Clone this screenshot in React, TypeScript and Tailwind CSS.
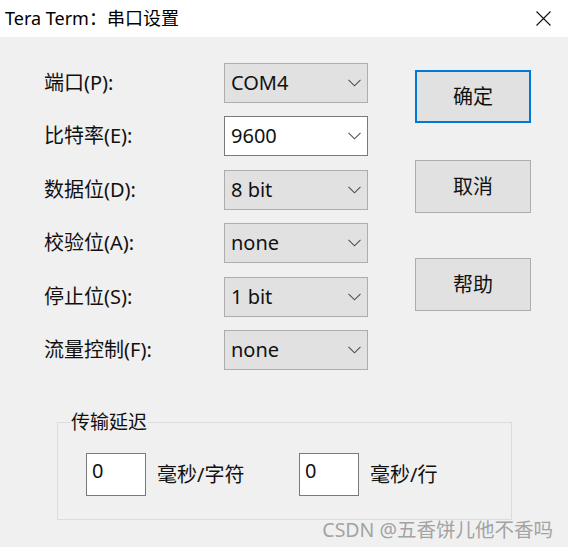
import React from "react";

const FONT = { fontFamily: '"Noto Sans", "Noto Sans CJK SC", sans-serif' };

function Chevron() {
  return (
    <svg width="13" height="8" viewBox="0 0 13 8" className="shrink-0">
      <path d="M0.5 0.8 L6.5 6.8 L12.5 0.8" fill="none" stroke="#505050" strokeWidth="1.1" />
    </svg>
  );
}

function Combo({ value, focused }: { value: string; focused?: boolean }) {
  return (
    <div
      className={
        "w-[144px] h-[40px] flex items-center justify-between pl-[6px] pr-[6px] border " +
        (focused ? "bg-white border-[#7a7a7a]" : "bg-[#e1e1e1] border-[#adadad]")
      }
    >
      <span className="text-[20px] text-[#111]">{value}</span>
      <Chevron />
    </div>
  );
}

function DlgButton({ label, primary }: { label: string; primary?: boolean }) {
  return (
    <button
      type="button"
      className={
        "w-[116px] h-[53px] bg-[#e1e1e1] text-[20px] text-[#111] flex items-center justify-center " +
        (primary ? "border-2 border-[#0078d7]" : "border border-[#adadad]")
      }
    >
      {label}
    </button>
  );
}

const rows = [
  { label: "端口(P):", value: "COM4" },
  { label: "比特率(E):", value: "9600", focused: true },
  { label: "数据位(D):", value: "8 bit" },
  { label: "校验位(A):", value: "none" },
  { label: "停止位(S):", value: "1 bit" },
  { label: "流量控制(F):", value: "none" },
];

export default function App() {
  return (
    <div className="w-[568px] h-[547px] bg-[#f0f0f0] overflow-hidden text-[#111]" style={FONT}>
      <div className="h-[37px] bg-white flex items-center justify-between pl-[5px] pr-[17px]">
        <span className="text-[18px] text-black">Tera Term：串口设置</span>
        <svg width="15" height="15" viewBox="0 0 15 15">
          <path d="M0.5 0.5 L14.5 14.5 M14.5 0.5 L0.5 14.5" stroke="#111" strokeWidth="1.1" />
        </svg>
      </div>

      <div className="flex pl-[44px]">
        <div className="flex flex-col gap-[13.4px] pt-[26px]">
          {rows.map((r) => (
            <div key={r.label} className="flex items-center">
              <span className="w-[180px] text-[20px]">{r.label}</span>
              <Combo value={r.value} focused={r.focused} />
            </div>
          ))}
        </div>
        <div className="flex flex-col ml-[47px] pt-[33px]">
          <DlgButton label="确定" primary />
          <div className="mt-[37px]">
            <DlgButton label="取消" />
          </div>
          <div className="mt-[45px]">
            <DlgButton label="帮助" />
          </div>
        </div>
      </div>

      <fieldset className="ml-[57px] mt-[38px] w-[455px] border border-[#dcdcdc] pl-[28px] pb-[23px] pt-[17px]">
        <legend className="text-[19px] px-[1px] ml-[-16px]">传输延迟</legend>
        <div className="flex items-center">
          <div className="w-[60px] h-[43px] bg-white border border-[#7a7a7a] flex items-start pl-[5px] pt-[5px]">
            <span className="text-[20px] leading-[24px]">0</span>
          </div>
          <span className="ml-[11px] text-[20px] w-[142px]">毫秒/字符</span>
          <div className="w-[60px] h-[43px] bg-white border border-[#7a7a7a] flex items-start pl-[5px] pt-[5px]">
            <span className="text-[20px] leading-[24px]">0</span>
          </div>
          <span className="ml-[11px] text-[20px]">毫秒/行</span>
        </div>
      </fieldset>

      <div className="flex justify-end pr-[15px] mt-[-1px]">
        <span className="text-[19.5px] leading-[22px] text-[#a3a3a3]">CSDN @五香饼儿他不香吗</span>
      </div>
    </div>
  );
}
